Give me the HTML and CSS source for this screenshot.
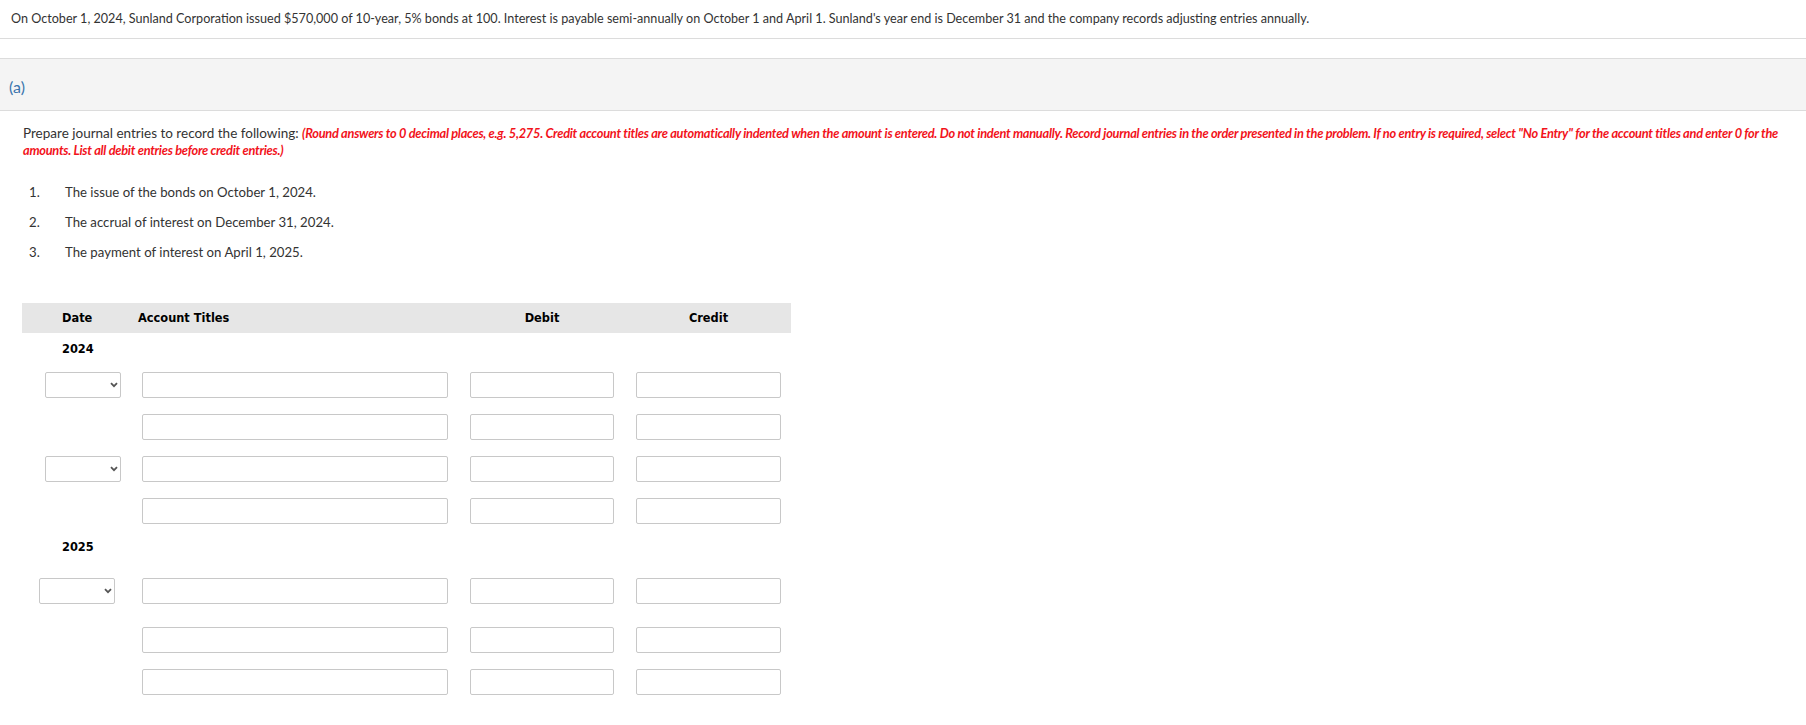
FILE: index.html
```html
<!DOCTYPE html>
<html lang="en">

<head>
    <meta charset="UTF-8">
    <meta name="viewport" content="width=device-width, initial-scale=1.0">
    <title>Bonds Journal Entries</title>
    <link rel="stylesheet" href="styles.css">
</head>

<body>
    <div class="intro">
        On October 1, 2024, Sunland Corporation issued $570,000 of 10-year, 5% bonds at 100. Interest is payable semi-annually on October 1 and April 1. Sunland's year end is December 31 and the company records adjusting entries annually.
    </div>

    <div class="part">(a)</div>

    <div class="question">
        <p class="prompt">Prepare journal entries to record the following: <span class="note">(Round answers to 0 decimal places, e.g. 5,275. Credit account titles are automatically indented when the amount is entered. Do not indent manually. Record journal entries in the order presented in the problem. If no entry is required, select "No Entry" for the account titles and enter 0 for the amounts. List all debit entries before credit entries.)</span></p>

        <ol class="steps">
            <li><span class="num">1.</span>The issue of the bonds on October 1, 2024.</li>
            <li><span class="num">2.</span>The accrual of interest on December 31, 2024.</li>
            <li><span class="num">3.</span>The payment of interest on April 1, 2025.</li>
        </ol>

        <div class="journal">
            <div class="head">
                <div class="h-date">Date</div>
                <div class="h-account">Account Titles</div>
                <div class="h-amount">Debit</div>
                <div class="h-amount">Credit</div>
            </div>

            <div class="year">2024</div>

            <div class="row first">
                <div class="date">
                    <select class="pick"></select>
                    <svg class="chevron" width="8" height="6" viewBox="0 0 8 6"><path d="M1 1.2 L4 4.2 L7 1.2" fill="none" stroke="#555" stroke-width="1.8"/></svg>
                </div>
                <input type="text" class="field">
                <input type="text" class="field">
                <input type="text" class="field">
            </div>
            <div class="row">
                <div class="date"></div>
                <input type="text" class="field">
                <input type="text" class="field">
                <input type="text" class="field">
            </div>
            <div class="row">
                <div class="date">
                    <select class="pick"></select>
                    <svg class="chevron" width="8" height="6" viewBox="0 0 8 6"><path d="M1 1.2 L4 4.2 L7 1.2" fill="none" stroke="#555" stroke-width="1.8"/></svg>
                </div>
                <input type="text" class="field">
                <input type="text" class="field">
                <input type="text" class="field">
            </div>
            <div class="row">
                <div class="date"></div>
                <input type="text" class="field">
                <input type="text" class="field">
                <input type="text" class="field">
            </div>

            <div class="year next">2025</div>

            <div class="row late">
                <div class="date shift">
                    <select class="pick"></select>
                    <svg class="chevron" width="8" height="6" viewBox="0 0 8 6"><path d="M1 1.2 L4 4.2 L7 1.2" fill="none" stroke="#555" stroke-width="1.8"/></svg>
                </div>
                <input type="text" class="field">
                <input type="text" class="field">
                <input type="text" class="field">
            </div>
            <div class="row wide">
                <div class="date"></div>
                <input type="text" class="field">
                <input type="text" class="field">
                <input type="text" class="field">
            </div>
            <div class="row">
                <div class="date"></div>
                <input type="text" class="field">
                <input type="text" class="field">
                <input type="text" class="field">
            </div>
        </div>
    </div>
</body>

</html>
```

FILE: styles.css
```css
* {
    box-sizing: border-box;
}

body {
    margin: 0;
    font-family: Lato, "Noto Sans", sans-serif;
    font-size: 13px;
    line-height: 17px;
    color: #333;
    background-color: white;
}

.intro {
    padding: 10px 11px 11px;
    font-size: 12.6px;
    border-bottom: 1px solid #dcdcdc;
}

.part {
    margin-top: 19px;
    height: 53px;
    padding: 0 9px;
    display: flex;
    align-items: center;
    padding-top: 3px;
    font-size: 16px;
    color: #3a74ad;
    background-color: #f4f4f4;
    border-top: 1px solid #dcdcdc;
    border-bottom: 1px solid #dcdcdc;
}

.question {
    padding: 0 14px 0 23px;
}

.prompt {
    margin: 14px 0 0;
    font-size: 13.5px;
}

.note {
    font-size: 12.8px;
    letter-spacing: -0.27px;
    color: #f2131b;
    font-weight: 700;
    font-style: italic;
}

.steps {
    list-style: none;
    margin: 25px 0 0;
    padding: 0 0 0 6px;
    font-size: 13.2px;
}

.steps li {
    display: flex;
}

.steps li + li {
    margin-top: 13px;
}

.num {
    width: 36px;
}

.journal {
    margin-top: 42px;
    width: 769px;
    margin-left: -1px;
    font-family: "DejaVu Sans", Verdana, sans-serif;
}

.head,
.row {
    display: grid;
    grid-template-columns: 98px 306px 144px 145px;
    column-gap: 22px;
}

.head {
    height: 30px;
    align-items: center;
    background-color: #e6e6e6;
    font-size: 11.4px;
    font-weight: 700;
    color: #000;
}

.h-date {
    padding-left: 40px;
}

.h-account {
    margin-left: -4px;
}

.h-amount {
    text-align: center;
}

.year {
    height: 32px;
    display: flex;
    align-items: center;
    padding-left: 40px;
    font-size: 11.4px;
    font-weight: 700;
    color: #000;
}

.year.next {
    margin-top: 7px;
}

.row {
    margin-top: 16px;
    height: 26px;
}

.row.first {
    margin-top: 7px;
}

.row.late {
    margin-top: 15px;
}

.row.wide {
    margin-top: 23px;
}

.date {
    position: relative;
    padding-left: 23px;
}

.date.shift {
    padding-left: 17px;
}

.pick {
    appearance: none;
    width: 76px;
    height: 26px;
    border: 1px solid #c8c8c8;
    border-radius: 2px;
    background-color: white;
    margin: 0;
}

.chevron {
    position: absolute;
    top: 10px;
    left: 88px;
}

.date.shift .chevron {
    left: 82px;
}

.field {
    height: 26px;
    margin: 0;
    border: 1px solid #c8c8c8;
    border-radius: 2px;
    background-color: white;
}
```
